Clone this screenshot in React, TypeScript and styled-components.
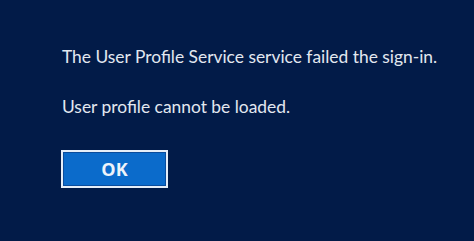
import React from "react";
import styled, { createGlobalStyle } from "styled-components";

const Global = createGlobalStyle`
  html, body { margin: 0; padding: 0; background: #021b48; }
  body { width: 474px; height: 241px; overflow: hidden; }
`;

const Screen = styled.div`
  width: 474px;
  height: 241px;
  box-sizing: border-box;
  background: #021b48;
  padding: 45px 0 0 62px;
  display: flex;
  flex-direction: column;
  align-items: flex-start;
  font-family: Lato, "Open Sans", sans-serif;
  color: #e2e8f0;
`;

const Message = styled.p<{ $gap: number }>`
  margin: 0 0 ${(p) => p.$gap}px 0;
  font-size: 17.4px;
  line-height: 24px;
  white-space: nowrap;
`;

const OkButton = styled.button`
  width: 107px;
  height: 38px;
  margin-left: -1px;
  box-sizing: border-box;
  border: 2px solid #e6eef8;
  box-shadow: inset 0 0 0 1px #0a4c9c;
  background: #0b6bcb;
  color: #eef3fa;
  font-family: "Open Sans", "Noto Sans", sans-serif;
  font-weight: 700;
  font-size: 18px;
  padding: 0 0 1px 0;
  display: flex;
  align-items: center;
  justify-content: center;
  cursor: pointer;
`;

export default function App() {
  return (
    <>
      <Global />
      <Screen>
        <Message $gap={26}>The User Profile Service service failed the sign-in.</Message>
        <Message $gap={31}>User profile cannot be loaded.</Message>
        <OkButton>OK</OkButton>
      </Screen>
    </>
  );
}
